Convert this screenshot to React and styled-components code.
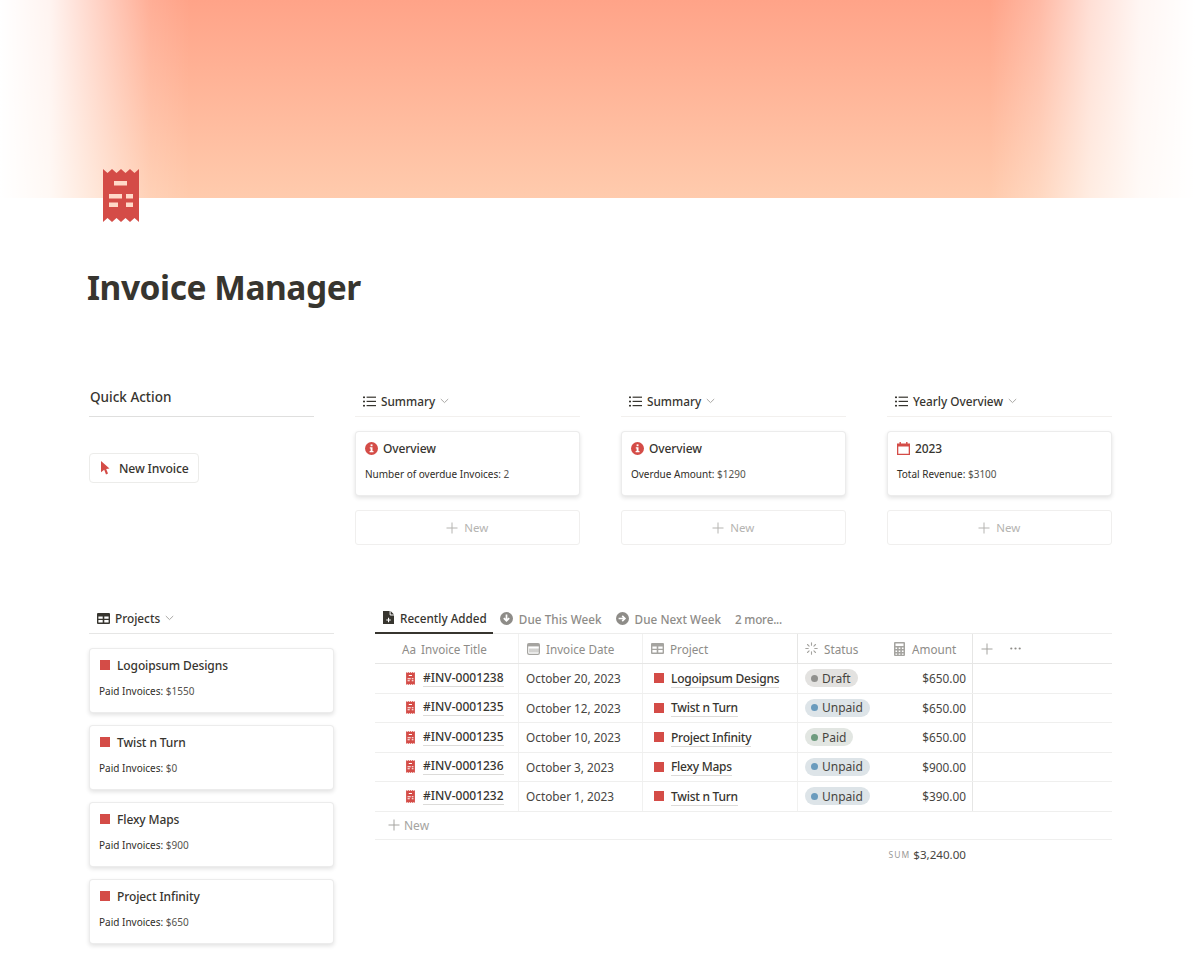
import React from "react";
import styled, { createGlobalStyle } from "styled-components";

const Global = createGlobalStyle`
  html, body { margin: 0; padding: 0; background: #fff; }
  body { font-family: "Noto Sans", "Open Sans", sans-serif; color: #37352f; -webkit-font-smoothing: antialiased; }
  * { box-sizing: border-box; }
`;

const RED = "#d44c47";

const Page = styled.div`
  width: 1200px;
  height: 969px;
  overflow: hidden;
`;
const Banner = styled.div`
  height: 198px;
  background:
    linear-gradient(90deg,
      rgba(255,255,255,1) 0,
      rgba(255,255,255,.88) 50px,
      rgba(255,255,255,.5) 100px,
      rgba(255,255,255,.12) 150px,
      rgba(255,255,255,0) 190px,
      rgba(255,255,255,0) 990px,
      rgba(255,255,255,.25) 1040px,
      rgba(255,255,255,.65) 1090px,
      rgba(255,255,255,.9) 1140px,
      rgba(255,255,255,1) 1195px),
    linear-gradient(180deg, #ffa388 0%, #ffcbad 100%);
`;
const Content = styled.div`
  padding: 0 88px 0 89px;
`;
const PageIcon = styled.div`
  margin: -29px 0 0 14px;
  height: 54px;
  width: 36px;
`;
const Title = styled.h1`
  margin: 41px 0 0 -2px;
  font-size: 33.5px;
  line-height: 46px;
  font-weight: 700;
  letter-spacing: -0.45px;
  color: #37352f;
`;
const TopGrid = styled.div`
  display: grid;
  grid-template-columns: repeat(4, 224.6px);
  column-gap: 41.4px;
  margin-top: 71px;
`;
const Column = styled.div`
  display: flex;
  flex-direction: column;
`;
const QuickTitle = styled.div`
  height: 36px;
  padding: 6px 0 0 1px;
  font-size: 13.5px;
  line-height: 20px;
  font-weight: 500;
  border-bottom: 1px solid #dfdfde;
`;
const ViewHeader = styled.div`
  height: 36px;
  display: flex;
  align-items: center;
  gap: 5px;
  padding: 5px 0 0 8px;
  font-size: 11.8px;
  font-weight: 500;
  border-bottom: 1px solid ${p => (p.$strong ? "#e6e6e5" : "#f2f0ee")};
`;
const Chevron = styled.span`
  display: inline-flex;
`;
const ActionButton = styled.div`
  margin-top: 36px;
  width: 110px;
  height: 30px;
  border: 1px solid #ececea;
  border-radius: 4px;
  display: flex;
  align-items: center;
  gap: 9px;
  padding-left: 11px;
  font-size: 12.2px;
  letter-spacing: -0.15px;
  font-weight: 500;
`;
const Card = styled.div`
  height: 65px;
  border-radius: 4px;
  background: #fff;
  border: 1px solid rgba(15,15,15,.08);
  box-shadow: 0 2px 4px rgba(15,15,15,.12);
  padding: 5px 9px 0;
  margin-top: ${p => p.$top || 0}px;
`;
const CardTitle = styled.div`
  display: flex;
  align-items: center;
  gap: ${p => p.$gap || 5}px;
  height: 22px;
  font-size: 12px;
  letter-spacing: -0.1px;
  font-weight: 500;
`;
const CardLine = styled.div`
  margin-top: 7px;
  font-size: 10px;
  line-height: 16px;
  font-weight: 400;
  color: #2f2d28;
  span { color: #55534e; }
`;
const NewCard = styled.div`
  margin-top: 14px;
  height: 35px;
  border: 1px solid #f0efee;
  border-radius: 3px;
  display: flex;
  align-items: center;
  justify-content: center;
  gap: 6px;
  color: #b5b4b1;
  font-size: 11.5px;
`;
const BottomGrid = styled.div`
  display: grid;
  grid-template-columns: 245px 737px;
  column-gap: 41px;
  margin-top: 53px;
`;
const CardStack = styled.div`
  display: flex;
  flex-direction: column;
  gap: 12px;
  margin-top: 14px;
`;
const Square = styled.span`
  display: inline-block;
  width: 10px;
  height: 10px;
  flex: none;
  background: ${RED};
  margin-left: ${p => p.$indent || 0}px;
`;
const Tabs = styled.div`
  height: 36px;
  display: flex;
  align-items: stretch;
  border-bottom: 1px solid #ededec;
`;
const Tab = styled.div`
  display: flex;
  align-items: center;
  gap: 6px;
  padding: 5px ${p => p.$right ?? 7}px 0 ${p => p.$left ?? 7}px;
  font-size: 11.7px;
  font-weight: 500;
  color: ${p => (p.$active ? "#37352f" : "#8e8c88")};
  border-bottom: ${p => (p.$active ? "2px solid #37352f" : "none")};
  margin-bottom: -1px;
`;
const TabLabel = styled.span`
  letter-spacing: ${p => p.$ls || 0}px;
`;
const Row = styled.div`
  display: grid;
  grid-template-columns: 144px 124px 155px 88px 87px 139px;
  height: ${p => p.$h || 29.5}px;
  border-bottom: 1px solid ${p => (p.$head ? "#e6e6e5" : "#efefee")};
`;
const Cell = styled.div`
  display: flex;
  align-items: center;
  min-width: 0;
  white-space: nowrap;
  gap: ${p => p.$gap || 0}px;
  padding-left: ${p => p.$pl ?? 7}px;
  padding-right: ${p => p.$pr || 0}px;
  justify-content: ${p => (p.$right ? "flex-end" : "flex-start")};
  border-right: ${p => (p.$line ? `1px solid ${p.$strong ? "#e6e6e5" : "#f1f1f0"}` : "none")};
  font-size: 11.8px;
  color: ${p => p.$color || "#37352f"};
`;
const HeadCell = styled(Cell)`
  color: #8e8c88;
  font-size: 11.7px;
`;
const LinkText = styled.span`
  font-size: 12px;
  font-weight: 500;
  line-height: 16px;
  border-bottom: 1px solid #dcdbd9;
`;
const ProjectLink = styled(LinkText)`
  letter-spacing: -0.25px;
  margin-top: 2px;
`;
const Pill = styled.span`
  display: inline-flex;
  align-items: center;
  gap: 4px;
  height: 18px;
  padding: 0 7px 0 6px;
  border-radius: 9px;
  font-size: 12px;
  background: ${p => p.$bg};
  color: #47453f;
`;
const Dot = styled.span`
  width: 7px;
  height: 7px;
  border-radius: 50%;
  background: ${p => p.$c};
`;
const AddRow = styled.div`
  height: 28px;
  display: flex;
  align-items: center;
  gap: 4px;
  padding-left: 13px;
  color: #a5a4a0;
  font-size: 12px;
  border-bottom: 1px solid #efefee;
`;
const SumRow = styled.div`
  display: flex;
  justify-content: flex-end;
  align-items: center;
  gap: 3px;
  height: 29px;
  padding: 1px 146px 0 0;
  font-size: 11.6px;
  color: #47453f;
`;
const SumLabel = styled.span`
  font-size: 8.5px;
  letter-spacing: 1.1px;
  color: #9b9a97;
`;

const Receipt = ({ w = 36, h = 53, bars = "#ffd9c8" }) => (
  <svg width={w} height={h} viewBox="0 0 36 53">
    <path fill={RED} d="M0 0l4.5 4L9 0l4.5 4L18 0l4.5 4L27 0l4.5 4L36 0v53l-4.5-4-4.5 4-4.5-4-4.5 4-4.5-4L9 53l-4.5-4L0 53z" />
    <path fill={bars} d="M11 12h13v4.500H11zM6 25h13v4.500H6zM23 25h7v4.500h-7zM6 33.500h9v4.500H6zM23 33.500h7v4.500h-7z" />
  </svg>
);
const SmallReceipt = () => <Receipt w={9} h={13} bars="#fff" />;
const Plus = ({ size = 12, c = "#b5b4b1" }) => (
  <svg width={size} height={size} viewBox="0 0 12 12"><path d="M6 .5v11M.5 6h11" stroke={c} strokeWidth="1" fill="none" /></svg>
);
const ListIcon = () => (
  <svg width="13" height="11" viewBox="0 0 13 11" fill="#37352f">
    <rect x="0" y="0.5" width="2" height="1.6" /><rect x="0" y="4.7" width="2" height="1.6" /><rect x="0" y="8.9" width="2" height="1.6" />
    <rect x="3.6" y="0.6" width="9.4" height="1.2" /><rect x="3.6" y="4.8" width="9.4" height="1.2" /><rect x="3.6" y="9" width="9.4" height="1.2" />
  </svg>
);
const ChevronIcon = () => (
  <Chevron>
    <svg width="9" height="6" viewBox="0 0 9 6"><path d="M.8 1l3.7 3.6L8.2 1" stroke="#a9a8a5" strokeWidth="1" fill="none" /></svg>
  </Chevron>
);
const InfoIcon = () => (
  <svg width="13" height="13" viewBox="0 0 13 13">
    <circle cx="6.5" cy="6.5" r="6.5" fill={RED} />
    <rect x="5.6" y="2.4" width="1.9" height="1.8" fill="#fff" />
    <path fill="#fff" d="M4.8 5.3h2.7v3.700h1v1.200H4.600V9h1V6.500h-.8z" />
  </svg>
);
const CalendarIcon = () => (
  <svg width="13" height="13" viewBox="0 0 13 13" fill={RED}>
    <path d="M2.5 0h1.4v1.4h5.200V0h1.400v1.400H13V13H0V1.400h2.500zM1.300 4.600v7.100h10.400V4.600z" />
  </svg>
);
const CursorIcon = () => (
  <svg width="9" height="14" viewBox="0 0 9 14"><path fill={RED} d="M0 0l8.500 7.500-3.300.4L7 12.600l-2 .9L3.200 8.700 0 11.200z" /></svg>
);
const TableIcon = ({ c = "#37352f" }) => (
  <svg width="13" height="11" viewBox="0 0 13 11">
    <path fill={c} d="M1 0h11a1 1 0 011 1v9a1 1 0 01-1 1H1a1 1 0 01-1-1V1a1 1 0 011-1zm.4 3.600v2.200h4.300V3.600zm5.900 0v2.200h4.300V3.600zM1.400 7v2.400h4.300V7zm5.900 0v2.400h4.300V7z" fillRule="evenodd" />
  </svg>
);
const DocIcon = () => (
  <svg width="11" height="13" viewBox="0 0 11 13">
    <path fill="#37352f" fillRule="evenodd" d="M0 0h6.600v3.600a.8.8 0 00.8.8H11V13H0zM7.600 0L11 3.400H7.600zM5 6.800v1.700H3.300v1.100H5v1.700h1.100V9.600h1.700V8.500H6.100V6.800z" />
  </svg>
);
const ArrowDownCircle = () => (
  <svg width="13" height="13" viewBox="0 0 13 13">
    <circle cx="6.5" cy="6.5" r="6.5" fill="#8e8c88" />
    <path d="M6.500 2.600v6M3.800 6.200l2.700 2.700 2.700-2.700" stroke="#fff" strokeWidth="1.7" fill="none" />
  </svg>
);
const ArrowRightCircle = () => (
  <svg width="13" height="13" viewBox="0 0 13 13">
    <circle cx="6.5" cy="6.5" r="6.5" fill="#8e8c88" />
    <path d="M2.600 6.500h6M6.200 3.800l2.700 2.700-2.700 2.700" stroke="#fff" strokeWidth="1.7" fill="none" />
  </svg>
);
const DateIcon = () => (
  <svg width="13" height="12" viewBox="0 0 13 12">
    <rect x=".6" y=".6" width="11.8" height="10.8" rx="1.6" fill="none" stroke="#a5a4a0" strokeWidth="1.2" />
    <rect x=".6" y=".6" width="11.8" height="2.8" fill="#a5a4a0" />
    <path d="M3 5.500v4M5 5.500v4M7 5.500v4M9 5.500v4M11 5.500v4" stroke="#a5a4a0" strokeWidth="1" />
  </svg>
);
const StatusIcon = () => (
  <svg width="13" height="13" viewBox="0 0 13 13">
    <path stroke="#a5a4a0" strokeWidth="1.1" strokeLinecap="round" fill="none"
      d="M6.500.8v2.400M6.500 9.800v2.400M.8 6.500h2.400M9.800 6.500h2.400M2.500 2.500l1.600 1.600M8.900 8.900l1.600 1.600M2.500 10.500l1.600-1.600M8.900 4.100l1.600-1.600" />
  </svg>
);
const CalcIcon = () => (
  <svg width="11" height="14" viewBox="0 0 11 14">
    <path fill="#a5a4a0" fillRule="evenodd" d="M1 0h9a1 1 0 011 1v12a1 1 0 01-1 1H1a1 1 0 01-1-1V1a1 1 0 011-1zm.5 1.500v2.600h8V1.500zm0 4v1.400h1.600V5.500zm3.200 0v1.400h1.600V5.500zm3.200 0v1.400h1.600V5.500zm-6.400 3v1.400h1.600V8.500zm3.200 0v1.400h1.600V8.500zm3.200 0v1.400h1.600V8.500zm-6.400 2.900v1.300h1.600v-1.300zm3.200 0v1.300h1.600v-1.300zm3.200 0v1.300h1.600v-1.300z" />
  </svg>
);
const Dots = () => (
  <svg width="11" height="3" viewBox="0 0 11 3" fill="#8e8c88"><circle cx="1.3" cy="1.5" r="1.1" /><circle cx="5.5" cy="1.5" r="1.1" /><circle cx="9.7" cy="1.5" r="1.1" /></svg>
);

const summaries = [
  { head: "Summary", icon: <InfoIcon />, title: "Overview", label: "Number of overdue Invoices:", value: "2" },
  { head: "Summary", icon: <InfoIcon />, title: "Overview", label: "Overdue Amount:", value: "$1290" },
  { head: "Yearly Overview", icon: <CalendarIcon />, title: "2023", label: "Total Revenue:", value: "$3100" },
];
const projects = [
  ["Logoipsum Designs", "$1550"],
  ["Twist n Turn", "$0"],
  ["Flexy Maps", "$900"],
  ["Project Infinity", "$650"],
];
const STATUS = {
  Draft: { bg: "#e3e2e0", c: "#91918e" },
  Unpaid: { bg: "#dde4e8", c: "#6a9bbd" },
  Paid: { bg: "#e2e6e2", c: "#6f9c7f" },
};
const invoices = [
  ["#INV-0001238", "October 20, 2023", "Logoipsum Designs", "Draft", "$650.00"],
  ["#INV-0001235", "October 12, 2023", "Twist n Turn", "Unpaid", "$650.00"],
  ["#INV-0001235", "October 10, 2023", "Project Infinity", "Paid", "$650.00"],
  ["#INV-0001236", "October 3, 2023", "Flexy Maps", "Unpaid", "$900.00"],
  ["#INV-0001232", "October 1, 2023", "Twist n Turn", "Unpaid", "$390.00"],
];

export default function App() {
  return (
    <Page>
      <Global />
      <Banner />
      <Content>
        <PageIcon><Receipt /></PageIcon>
        <Title>Invoice Manager</Title>
        <TopGrid>
          <Column>
            <QuickTitle>Quick Action</QuickTitle>
            <ActionButton><CursorIcon />New Invoice</ActionButton>
          </Column>
          {summaries.map((s, i) => (
            <Column key={i}>
              <ViewHeader><ListIcon />{s.head}<ChevronIcon /></ViewHeader>
              <Card $top={14}>
                <CardTitle>{s.icon}{s.title}</CardTitle>
                <CardLine>{s.label} <span>{s.value}</span></CardLine>
              </Card>
              <NewCard><Plus />New</NewCard>
            </Column>
          ))}
        </TopGrid>
        <BottomGrid>
          <Column>
            <ViewHeader $strong><TableIcon />Projects<ChevronIcon /></ViewHeader>
            <CardStack>
              {projects.map(([name, paid]) => (
                <Card key={name}>
                  <CardTitle $gap={7}><Square $indent={1} />{name}</CardTitle>
                  <CardLine>Paid Invoices: <span>{paid}</span></CardLine>
                </Card>
              ))}
            </CardStack>
          </Column>
          <Column>
            <Tabs>
              <Tab $active $left={8} $right={6}><DocIcon /><TabLabel>Recently Added</TabLabel></Tab>
              <Tab><ArrowDownCircle /><TabLabel $ls={0.05}>Due This Week</TabLabel></Tab>
              <Tab><ArrowRightCircle /><TabLabel $ls={0.05}>Due Next Week</TabLabel></Tab>
              <Tab><TabLabel $ls={-0.2}>2 more...</TabLabel></Tab>
            </Tabs>
            <Row $head $h={30}>
              <HeadCell $pl={27} $gap={5} $line><span>Aa</span>Invoice Title</HeadCell>
              <HeadCell $pl={8} $gap={6} $line><DateIcon />Invoice Date</HeadCell>
              <HeadCell $pl={8} $gap={6} $line $strong><TableIcon c="#a5a4a0" />Project</HeadCell>
              <HeadCell $pl={7} $gap={6}><StatusIcon />Status</HeadCell>
              <HeadCell $pl={8} $gap={7} $line $strong><CalcIcon />Amount</HeadCell>
              <HeadCell $pl={8} $gap={17}><Plus c="#a5a4a0" /><Dots /></HeadCell>
            </Row>
            {invoices.map(([id, date, project, status, amount], i) => (
              <Row key={i}>
                <Cell $pl={31} $gap={8} $line><SmallReceipt /><LinkText>{id}</LinkText></Cell>
                <Cell $pl={7} $line $color="#47453f">{date}</Cell>
                <Cell $pl={11} $gap={7} $line><Square /><ProjectLink>{project}</ProjectLink></Cell>
                <Cell $pl={7}><Pill $bg={STATUS[status].bg}><Dot $c={STATUS[status].c} />{status}</Pill></Cell>
                <Cell $pl={0} $pr={6} $right $line $strong $color="#47453f">{amount}</Cell>
                <Cell />
              </Row>
            ))}
            <AddRow><Plus c="#a5a4a0" />New</AddRow>
            <SumRow><SumLabel>SUM</SumLabel>$3,240.00</SumRow>
          </Column>
        </BottomGrid>
      </Content>
    </Page>
  );
}
